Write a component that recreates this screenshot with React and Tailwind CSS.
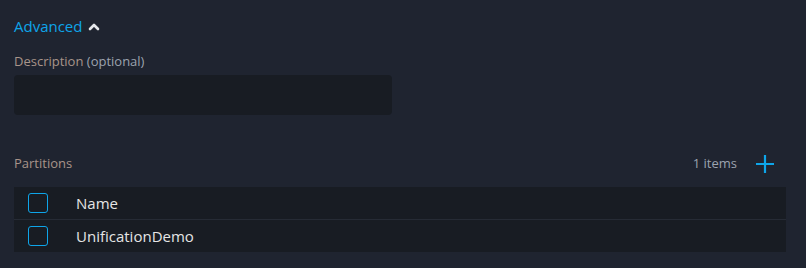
import React from "react";

function Checkbox() {
  return <div className="w-5 h-5 rounded-[3px] border border-[#0ea5e9] shrink-0" />;
}

export default function App() {
  return (
    <div
      className="w-[806px] h-[268px] bg-[#1f2430] px-[14px] pt-[14px] overflow-hidden"
      style={{ fontFamily: '"Open Sans", "Noto Sans", sans-serif' }}
    >
      <div className="flex items-center gap-[6px] h-[24px]">
        <span className="text-[15px] text-[#0ea5e9]">Advanced</span>
        <svg width="12" height="10" viewBox="0 0 12 10" className="mt-[1px]">
          <path d="M2 7 L6 3 L10 7" fill="none" stroke="#e5e7eb" strokeWidth="2.6" strokeLinecap="round" strokeLinejoin="round" />
        </svg>
      </div>
      <div className="mt-[14px] text-[13px] leading-[18px] text-[#a8948a]">
        Description <span className="text-[#9ca3af] font-medium">(optional)</span>
      </div>
      <div className="mt-[5px] w-[378px] h-[40px] rounded-[4px] bg-[#181c23]" />
      <div className="mt-[37px] flex items-center h-[24px] pr-[17px]">
        <span className="text-[13px] text-[#a8948a] flex-1">Partitions</span>
        <span className="text-[13px] text-[#9ca3af] mr-[18px]">1 items</span>
        <svg width="20" height="20" viewBox="0 0 20 20">
          <path d="M10 1 V19 M1 10 H19" stroke="#0ea5e9" strokeWidth="2.2" />
        </svg>
      </div>
      <div className="mt-[11px] w-[772px] bg-[#181c23]">
        <div className="flex items-center h-[33px] border-b border-[#262b35] pl-[14px]">
          <Checkbox />
          <span className="ml-[28px] text-[15px] text-[#e5e5e5]">Name</span>
        </div>
        <div className="flex items-center h-[32px] pl-[14px]">
          <Checkbox />
          <span className="ml-[28px] text-[15px] text-[#e5e5e5]">UnificationDemo</span>
        </div>
      </div>
    </div>
  );
}
